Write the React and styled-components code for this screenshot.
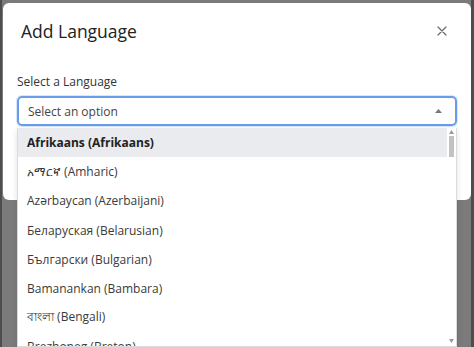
import React from 'react'
import styled, { createGlobalStyle } from 'styled-components'

const GlobalStyle = createGlobalStyle`
    html, body {
        margin: 0;
        padding: 0;
        background: #7b7b7b;
    }
    * {
        box-sizing: border-box;
    }
`

const languages = [
    { native: 'Afrikaans', name: 'Afrikaans' },
    { native: 'አማርኛ', name: 'Amharic' },
    { native: 'Azərbaycan', name: 'Azerbaijani' },
    { native: 'Беларуская', name: 'Belarusian' },
    { native: 'Български', name: 'Bulgarian' },
    { native: 'Bamanankan', name: 'Bambara' },
    { native: 'বাংলা', name: 'Bengali' },
    { native: 'Brezhoneg', name: 'Breton' },
]

const App = () => {
    return (
        <>
            <GlobalStyle />
            <Backdrop>
                <Modal>
                    <Header>
                        <Title>Add Language</Title>
                        <CloseButton aria-label='Close'>
                            <svg width='10' height='10' viewBox='0 0 10 10'>
                                <path d='M1 1 L9 9 M9 1 L1 9' stroke='#6b6b6b' strokeWidth='1.2' strokeLinecap='round' />
                            </svg>
                        </CloseButton>
                    </Header>

                    <Field>
                        <Label>Select a Language</Label>
                        <SelectBox>
                            <Placeholder>Select an option</Placeholder>
                            <svg width='7' height='4' viewBox='0 0 7 4'>
                                <path d='M0 4 L3.5 0 L7 4 Z' fill='#777' />
                            </svg>

                            <Menu>
                                <Options>
                                    {languages.map((lang, i) => (
                                        <Option key={lang.name} active={i === 0}>
                                            {lang.native} ({lang.name})
                                        </Option>
                                    ))}
                                </Options>
                                <ScrollTrack>
                                    <ScrollTop>
                                        <svg width='5' height='4' viewBox='0 0 5 4'>
                                            <path d='M0 4 L2.5 0 L5 4 Z' fill='#9a9a9a' />
                                        </svg>
                                        <ScrollThumb />
                                    </ScrollTop>
                                    <svg width='5' height='4' viewBox='0 0 5 4'>
                                        <path d='M0 0 L2.5 4 L5 0 Z' fill='#9a9a9a' />
                                    </svg>
                                </ScrollTrack>
                            </Menu>
                        </SelectBox>
                    </Field>
                </Modal>
            </Backdrop>
        </>
    )
}

export default App

const Backdrop = styled.div`
    width: 474px;
    height: 347px;
    overflow: hidden;
    padding: 3px 0 0 1px;
    background: #7b7b7b;
    border-left: 2px solid #4e4e4e;
    border-right: 3px solid #4e4e4e;
    font-family: "Open Sans", "Noto Sans", "DejaVu Sans", sans-serif;
`

const Modal = styled.div`
    background: #fff;
    border-radius: 6px;
    height: 197px;
    padding: 14px 14px 0 14px;
`

const Header = styled.div`
    display: flex;
    align-items: center;
    justify-content: space-between;
    padding: 0 10px 0 4px;
    height: 28px;
`

const Title = styled.h2`
    margin: 0;
    font-size: 17.5px;
    font-weight: 400;
    color: #222;
`

const CloseButton = styled.button`
    display: flex;
    border: none;
    background: none;
    padding: 0;
    cursor: pointer;
`

const Field = styled.div`
    display: flex;
    flex-direction: column;
    margin-top: 28px;
`

const Label = styled.label`
    font-size: 12px;
    color: #333;
    line-height: 17px;
    margin-bottom: 6px;
`

const SelectBox = styled.div`
    position: relative;
    display: flex;
    align-items: center;
    justify-content: space-between;
    height: 30px;
    padding: 0 13px 0 9px;
    border: 2px solid #6a9cec;
    border-radius: 5px;
    box-shadow: 0 0 0 1px rgba(106, 156, 236, 0.25);
`

const Placeholder = styled.span`
    font-size: 12px;
    color: #444;
`

const Menu = styled.div`
    position: absolute;
    top: 30px;
    left: -2px;
    right: -2px;
    height: 219px;
    overflow: hidden;
    display: flex;
    background: #fff;
    border: 1px solid #dcdcdc;
    border-top: none;
    box-shadow: 0 2px 6px rgba(0, 0, 0, 0.12);
`

const Options = styled.ul`
    flex: 1;
    margin: 0;
    padding: 0;
    list-style: none;
`

const Option = styled.li`
    height: 29.2px;
    display: flex;
    align-items: center;
    padding-left: 9px;
    font-size: 12px;
    color: ${({ active }) => (active ? '#222' : '#3a3a3a')};
    font-weight: ${({ active }) => (active ? 700 : 400)};
    background: ${({ active }) => (active ? '#e9ebef' : '#fff')};
`

const ScrollTrack = styled.div`
    width: 9px;
    display: flex;
    flex-direction: column;
    align-items: center;
    justify-content: space-between;
    padding: 2px 0 3px;
`

const ScrollTop = styled.div`
    display: flex;
    flex-direction: column;
    align-items: center;
    gap: 2px;
`

const ScrollThumb = styled.div`
    width: 5px;
    height: 21px;
    background: #c2c2c2;
`
